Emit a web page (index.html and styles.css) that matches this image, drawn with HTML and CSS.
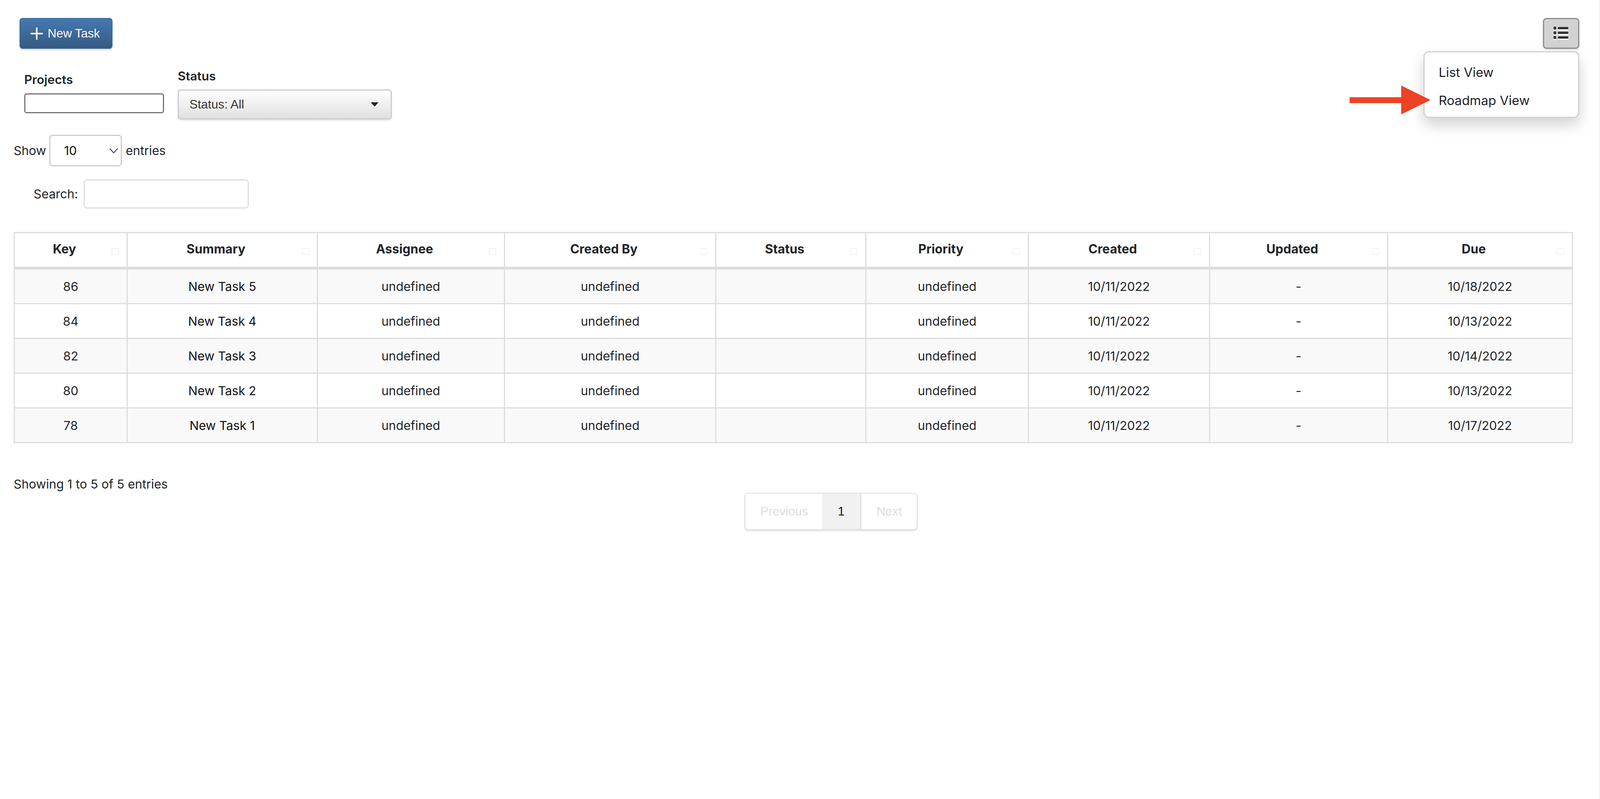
FILE: index.html
```html
<!DOCTYPE html>
<html lang="en">
<head>
<meta charset="utf-8">
<title>Tasks</title>
<link rel="stylesheet" href="styles.css">
</head>
<body>
<div class="page">
  <div class="toolbar">
    <button class="btn-primary" type="button"><svg class="plus" viewBox="0 0 32 32"><path d="M16 2v28M2 16h28"/></svg>New Task</button>
    <button class="btn-view" type="button">
      <svg class="list-icon" viewBox="0 0 40 40">
        <g fill="#fff"><rect x="0" y="5" width="7" height="8" rx="3"/><rect x="0" y="17" width="7" height="8" rx="3"/><rect x="0" y="29" width="7" height="8" rx="3"/><rect x="11" y="5" width="27" height="7" rx="2.5"/><rect x="11" y="17" width="27" height="7" rx="2.5"/><rect x="11" y="29" width="27" height="7" rx="2.5"/></g>
        <g fill="#333"><rect x="0" y="2" width="7" height="8" rx="3"/><rect x="0" y="14" width="7" height="8" rx="3"/><rect x="0" y="26" width="7" height="8" rx="3"/><rect x="11" y="3" width="27" height="6" rx="2.5"/><rect x="11" y="15" width="27" height="6" rx="2.5"/><rect x="11" y="27" width="27" height="6" rx="2.5"/></g>
      </svg>
    </button>
    <ul class="menu">
      <li>List View</li>
      <li>Roadmap View</li>
    </ul>
    <svg class="arrow" viewBox="0 0 207 74"><path d="M0 30h132V0l75 37-75 37V45H0z"/></svg>
  </div>

  <div class="filters">
    <div class="filter-projects">
      <label class="filter-label" for="projects">Projects</label>
      <input class="projects-input" id="projects" type="text">
    </div>
    <div class="filter-status">
      <div class="filter-label">Status</div>
      <button class="status-select" type="button"><span>Status: All</span><i class="caret"></i></button>
    </div>
  </div>

  <div class="length-row">
    <span>Show</span>
    <span class="length-select"><span>10</span><svg class="chev" viewBox="0 0 22 14"><path d="M1 1.5 11 12.5l10-11"/></svg></span>
    <span>entries</span>
  </div>

  <div class="search-row">
    <label for="search">Search:</label>
    <input class="search-input" id="search" type="search">
  </div>

  <table class="grid">
    <colgroup>
      <col class="c1"><col class="c2"><col class="c3"><col class="c4"><col class="c5"><col class="c6"><col class="c7"><col class="c8"><col class="c9">
    </colgroup>
    <thead>
      <tr>
        <th>Key<i class="sort"></i></th>
        <th>Summary<i class="sort"></i></th>
        <th>Assignee<i class="sort"></i></th>
        <th>Created By<i class="sort"></i></th>
        <th>Status<i class="sort"></i></th>
        <th>Priority<i class="sort"></i></th>
        <th>Created<i class="sort"></i></th>
        <th>Updated<i class="sort"></i></th>
        <th>Due<i class="sort"></i></th>
      </tr>
    </thead>
    <tbody>
      <tr><td>86</td><td class="dark">New Task 5</td><td>undefined</td><td>undefined</td><td></td><td>undefined</td><td>10/11/2022</td><td>-</td><td>10/18/2022</td></tr>
      <tr><td>84</td><td class="dark">New Task 4</td><td>undefined</td><td>undefined</td><td></td><td>undefined</td><td>10/11/2022</td><td>-</td><td>10/13/2022</td></tr>
      <tr><td>82</td><td class="dark">New Task 3</td><td>undefined</td><td>undefined</td><td></td><td>undefined</td><td>10/11/2022</td><td>-</td><td>10/14/2022</td></tr>
      <tr><td>80</td><td class="dark">New Task 2</td><td>undefined</td><td>undefined</td><td></td><td>undefined</td><td>10/11/2022</td><td>-</td><td>10/13/2022</td></tr>
      <tr><td>78</td><td class="dark">New Task 1</td><td>undefined</td><td>undefined</td><td></td><td>undefined</td><td>10/11/2022</td><td>-</td><td>10/17/2022</td></tr>
    </tbody>
  </table>

  <div class="info">Showing 1 to 5 of 5 entries</div>

  <div class="pagination">
    <span class="pg-prev">Previous</span>
    <span class="pg-current">1</span>
    <span class="pg-next">Next</span>
  </div>
</div>
</body>
</html>
```

FILE: styles.css
```css
/* Note: the render sandbox reported innerWidth 4096 (screen 4096) although a
   4606x2046 window was requested, so a fixed 4606px layout was cut off at the
   right. The layout is therefore fluid: sizes are the reference's own pixels,
   and the table columns, right-hand toolbar items and pagination follow the
   window width. They land on the reference's x positions only at 4606; in the
   4096 picture they sit proportionally further left. */
* { box-sizing: border-box; }
html, body { margin: 0; padding: 0; background: #fff; }
body {
  font-family: "Inter", "Liberation Sans", sans-serif;
  font-size: 31.5px;
  color: #212529;
  height: 2046px;
  overflow: hidden;
}
.page {
  width: 100%;
  height: 2046px;
  padding: 46px 67px 0 35px;
  border-right: 2px solid #f2f2f2;
}

.toolbar {
  position: relative;
  display: flex;
  justify-content: space-between;
  align-items: flex-start;
  height: 79px;
  margin-right: -16px;
  padding-left: 15px;
}
.btn-primary {
  display: flex;
  align-items: center;
  width: 238px;
  height: 79px;
  padding: 0 0 0 26px;
  font-family: "Liberation Sans", sans-serif;
  font-size: 31px;
  color: #fff;
  text-shadow: 0 -2px 0 rgba(0,0,0,.2);
  background: linear-gradient(#4679b0, #365a83);
  border: 2px solid #3a6a9c;
  border-radius: 8px;
  box-shadow: 0 3px 4px rgba(0,0,0,.15);
}
.plus { width: 32px; height: 32px; margin-right: 12px; fill: none; stroke: #fff; stroke-width: 4; stroke-linecap: round; }
.btn-view {
  display: flex;
  align-items: center;
  justify-content: center;
  width: 93px;
  height: 79px;
  padding: 0;
  background: #d2d2d2;
  border: 3px solid #8c8c8c;
  border-radius: 9px;
  box-shadow: 0 2px 4px rgba(0,0,0,.15);
}
.list-icon { width: 40px; height: 40px; }
.menu {
  position: absolute;
  top: 85px;
  right: 0;
  width: 399px;
  height: 171px;
  margin: 0;
  padding: 15px 0 0 36px;
  font-size: 33px;
  list-style: none;
  background: #fff;
  border: 3px solid #d0d0d0;
  border-radius: 14px;
  box-shadow: 0 18px 36px rgba(0,0,0,.18);
}
.menu li { height: 72px; line-height: 72px; }
.arrow {
  position: absolute;
  top: 173px;
  right: 381px;
  width: 207px;
  height: 74px;
  fill: #ec4326;
}

.filters { display: flex; align-items: flex-start; height: 181px; padding: 53px 0 0 27px; }
.filter-label { display: block; font-weight: 600; height: 34px; line-height: 34px; }
.filter-projects { width: 393px; padding-top: 9px; }
.projects-input {
  display: block;
  width: 358px;
  height: 51px;
  margin-top: 18px;
  border: 3px solid #757575;
  border-radius: 6px;
  background: #fff;
}
.status-select {
  display: flex;
  align-items: center;
  justify-content: space-between;
  width: 548px;
  height: 77px;
  margin-top: 17px;
  padding: 0 31px 0 27px;
  font-family: "Liberation Sans", sans-serif;
  font-size: 31.5px;
  color: #333;
  text-shadow: 0 3px 0 #fff;
  background: linear-gradient(#fff, #e0e0e0);
  border: 3px solid #ccc;
  border-radius: 8px;
  box-shadow: 0 3px 4px rgba(0,0,0,.1);
}
.caret { width: 0; height: 0; border-left: 10px solid transparent; border-right: 10px solid transparent; border-top: 11px solid #222; }

.length-row { display: flex; align-items: center; gap: 8px; height: 81px; margin-top: 39px; }
.length-select {
  display: flex;
  align-items: center;
  justify-content: space-between;
  width: 186px;
  height: 81px;
  margin-right: 2px;
  padding: 0 7px 0 35px;
  color: #111;
  background: #fff;
  border: 3px solid #ccc;
  border-radius: 9px;
}
.chev { width: 22px; height: 14px; fill: none; stroke: #333; stroke-width: 2; }

.search-row { display: flex; align-items: center; gap: 14px; height: 75px; margin-top: 33px; padding-left: 51px; }
.search-input {
  width: 423px;
  height: 75px;
  background: #fff;
  border: 3px solid #ddd;
  border-radius: 9px;
  appearance: none;
}

.grid {
  width: 100%;
  margin-top: 60px;
  table-layout: fixed;
  border-collapse: separate;
  border-spacing: 0;
  border-top: 3px solid #ddd;
  border-left: 3px solid #ddd;
}
.c1 { width: 7.246%; } .c2 { width: 12.203%; } .c3 { width: 12.003%; }
.c4 { width: 13.581%; } .c5 { width: 9.624%; } .c6 { width: 10.425%; }
.c7 { width: 11.625%; } .c8 { width: 11.425%; } .c9 { width: 11.868%; }
.grid th {
  position: relative;
  height: 93px;
  padding: 0 32px 6px 0;
  font-size: 32px;
  font-weight: 700;
  text-align: center;
  border-right: 3px solid #ddd;
  border-bottom: 7px solid #ddd;
}
.sort {
  position: absolute;
  top: 38px;
  right: 19px;
  width: 20px;
  height: 18px;
  border: 3px solid #f6f6f6;
}
.grid td {
  height: 89px;
  padding: 0;
  text-align: center;
  border-right: 3px solid #ddd;
  border-bottom: 3px solid #ddd;
}
.grid tbody tr:nth-child(odd) td { background: #f9f9f9; }
.grid td.dark { color: #111; }

.info { height: 34px; line-height: 34px; margin-top: 88px; }
.pagination {
  display: flex;
  align-items: stretch;
  width: 443px;
  height: 95px;
  margin: 5px 0 0 46.87%;
  font-family: "Liberation Sans", sans-serif;
  background: #fff;
  border: 2px solid #ddd;
  border-radius: 9px;
  box-shadow: 0 3px 4px rgba(0,0,0,.12);
  color: #ddd;
}
.pg-prev { display: flex; align-items: center; justify-content: center; width: 197px; padding-left: 2px; }
.pg-current { display: flex; align-items: center; justify-content: center; width: 100px; color: #111; background: #f1f1f1; border-right: 3px solid #ddd; }
.pg-next { display: flex; align-items: center; justify-content: center; flex: 1; }
```
